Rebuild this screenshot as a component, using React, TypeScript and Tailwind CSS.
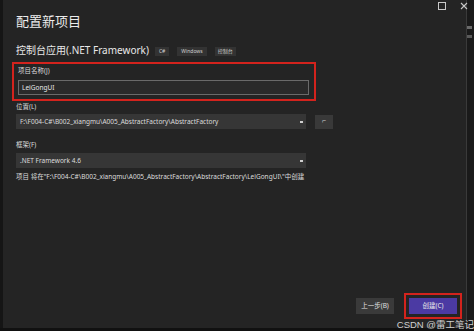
import React from "react";

const font = { fontFamily: '"Noto Sans", "Noto Sans CJK SC", sans-serif' };

function Caret() {
  return <span className="block w-[3px] h-[2px] bg-[#cfcfcf]" />;
}

export default function App() {
  return (
    <div className="w-[474px] h-[331px] bg-[#141414] flex flex-col overflow-hidden text-[#e6e6e6]" style={font}>
      <div className="flex flex-1 min-h-0">
        <div className="relative flex-1 bg-[#242424] border-l-[3px] border-[#151515] border-r border-r-[#3a3a3a] flex flex-col">
          {/* window controls */}
          <div className="absolute right-[-2px] top-[2px] flex items-center gap-[14px] text-[#c8c8c8]">
            <span className="block w-[8px] h-[8px] border border-[#c8c8c8]" />
            <svg width="8" height="8" viewBox="0 0 8 8">
              <path d="M1 1L7 7M7 1L1 7" stroke="#c8c8c8" strokeWidth="1.1" />
            </svg>
          </div>

          <div className="pl-[13px] pr-[4px] pt-[12px] flex flex-col flex-1">
            <div className="text-[13px] leading-[18px] text-[#ececec]">配置新项目</div>
            <div className="mt-[13px] flex items-center h-[14px]">
              <span className="text-[10px] leading-[14px] text-[#e8e8e8]">控制台应用(.NET Framework)</span>
              <div className="ml-[6px] flex gap-[8px] mt-[3px]">
                <span className="bg-[#333333] text-[5px] leading-[9px] px-[4px] text-[#d0d0d0]">C#</span>
                <span className="bg-[#333333] text-[5px] leading-[9px] px-[4px] text-[#d0d0d0]">Windows</span>
                <span className="bg-[#333333] text-[5px] leading-[9px] px-[3px] text-[#d0d0d0]">控制台</span>
              </div>
            </div>

            <div className="mt-[5px] -ml-[4px] w-[304px] border-2 border-[#d3231d] pl-[4px] pr-[5px] pt-[2px] pb-[4px]">
              <div className="text-[6.5px] leading-[10px] text-[#dcdcdc]">项目名称(J)</div>
              <div className="mt-[4px] h-[15px] border border-[#6a6a6a] bg-[#2a2a2a] flex items-center pl-[3px] text-[6.5px] text-[#e8e8e8]">LeiGongUI</div>
            </div>

            <div className="mt-[1px] text-[6.5px] leading-[10px] text-[#dcdcdc]">位置(L)</div>
            <div className="mt-[2px] flex items-center gap-[9px]">
              <div className="w-[290px] h-[15px] bg-[#363636] flex items-center justify-between pl-[4px] pr-[3px] text-[6.5px] text-[#dcdcdc]">
                <span>F:\F004-C#\B002_xiangmu\A005_AbstractFactory\AbstractFactory</span>
                <Caret />
              </div>
              <div className="w-[18px] h-[14px] bg-[#393939] flex items-center justify-center text-[7px] text-[#cfcfcf]">⌐</div>
            </div>

            <div className="mt-[11px] text-[6.5px] leading-[10px] text-[#dcdcdc]">框架(F)</div>
            <div className="mt-[3px] w-[290px] h-[15px] bg-[#363636] flex items-center justify-between pl-[4px] pr-[3px] text-[6.5px] text-[#dcdcdc]">
              <span>.NET Framework 4.6</span>
              <Caret />
            </div>

            <div className="mt-[4px] text-[6.5px] leading-[10px] text-[#dcdcdc]">
              项目 将在"F:\F004-C#\B002_xiangmu\A005_AbstractFactory\AbstractFactory\LeiGongUI\"中创建
            </div>

            <div className="mt-auto mb-[14px] flex justify-end items-center gap-[10px] pr-[0px]">
              <div className="w-[38px] h-[16px] bg-[#3a3a3a] flex items-center justify-center text-[6.5px] text-[#e0e0e0]">上一步(B)</div>
              <div className="border-2 border-[#d3231d] p-[3px] -my-[5px]">
                <div className="w-[48px] h-[16px] bg-[#4b3aa3] flex items-center justify-center text-[6.5px] text-[#ececec]">创建(C)</div>
              </div>
            </div>
          </div>

          <div className="absolute right-[-8px] bottom-[-3px] text-[9.5px] leading-[13px] text-[#d0d0d0]" style={{ fontFamily: '"Liberation Sans", "Noto Sans CJK SC", sans-serif' }}>
            CSDN @雷工笔记
          </div>
        </div>
        <div className="w-[7px] bg-[#1a1a1a] flex flex-col pt-[26px] gap-[6px]">
          <span className="block w-[5px] h-[3px] bg-[#6a6a6a]" />
          <span className="block w-[5px] h-[3px] bg-[#5a5a5a]" />
        </div>
      </div>
      <div className="h-[3px] bg-[#111]" />
    </div>
  );
}
